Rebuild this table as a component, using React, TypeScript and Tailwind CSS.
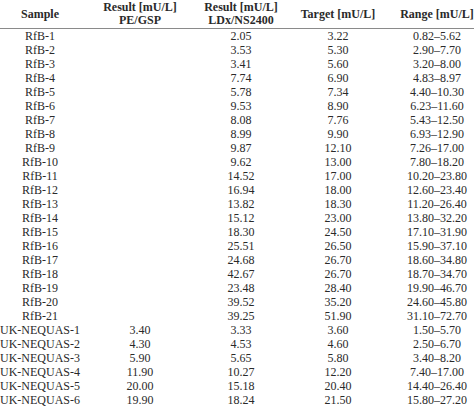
const rows: [string, string, string, string, string][] = [
  ["RfB-1", "", "2.05", "3.22", "0.82–5.62"],
  ["RfB-2", "", "3.53", "5.30", "2.90–7.70"],
  ["RfB-3", "", "3.41", "5.60", "3.20–8.00"],
  ["RfB-4", "", "7.74", "6.90", "4.83–8.97"],
  ["RfB-5", "", "5.78", "7.34", "4.40–10.30"],
  ["RfB-6", "", "9.53", "8.90", "6.23–11.60"],
  ["RfB-7", "", "8.08", "7.76", "5.43–12.50"],
  ["RfB-8", "", "8.99", "9.90", "6.93–12.90"],
  ["RfB-9", "", "9.87", "12.10", "7.26–17.00"],
  ["RfB-10", "", "9.62", "13.00", "7.80–18.20"],
  ["RfB-11", "", "14.52", "17.00", "10.20–23.80"],
  ["RfB-12", "", "16.94", "18.00", "12.60–23.40"],
  ["RfB-13", "", "13.82", "18.30", "11.20–26.40"],
  ["RfB-14", "", "15.12", "23.00", "13.80–32.20"],
  ["RfB-15", "", "18.30", "24.50", "17.10–31.90"],
  ["RfB-16", "", "25.51", "26.50", "15.90–37.10"],
  ["RfB-17", "", "24.68", "26.70", "18.60–34.80"],
  ["RfB-18", "", "42.67", "26.70", "18.70–34.70"],
  ["RfB-19", "", "23.48", "28.40", "19.90–46.70"],
  ["RfB-20", "", "39.52", "35.20", "24.60–45.80"],
  ["RfB-21", "", "39.25", "51.90", "31.10–72.70"],
  ["UK-NEQUAS-1", "3.40", "3.33", "3.60", "1.50–5.70"],
  ["UK-NEQUAS-2", "4.30", "4.53", "4.60", "2.50–6.70"],
  ["UK-NEQUAS-3", "5.90", "5.65", "5.80", "3.40–8.20"],
  ["UK-NEQUAS-4", "11.90", "10.27", "12.20", "7.40–17.00"],
  ["UK-NEQUAS-5", "20.00", "15.18", "20.40", "14.40–26.40"],
  ["UK-NEQUAS-6", "19.90", "18.24", "21.50", "15.80–27.20"],
];

const cols = "grid grid-cols-[80px_120px_82px_118px_74px]";

export default function App() {
  return (
    <div className="w-[474px] h-[409px] overflow-hidden bg-white text-[#2a2a2a] text-[12px] font-['Liberation_Serif',serif]">
      <div className={`${cols} h-[29px] items-center font-bold leading-[13px] text-center border-b-[1.5px] border-[#8a8a8a]`}>
        <div>Sample</div>
        <div>
          Result [mU/L]
          <br />
          PE/GSP
        </div>
        <div>
          Result [mU/L]
          <br />
          LDx/NS2400
        </div>
        <div className="pr-[6px]">Target [mU/L]</div>
        <div>Range [mU/L]</div>
      </div>
      {rows.map((r) => (
        <div key={r[0]} className={`${cols} h-[14px] items-center leading-[14px] text-center`}>
          <div className="whitespace-nowrap">{r[0]}</div>
          <div>{r[1]}</div>
          <div>{r[2]}</div>
          <div className="pr-[6px]">{r[3]}</div>
          <div className="whitespace-nowrap">{r[4]}</div>
        </div>
      ))}
    </div>
  );
}
